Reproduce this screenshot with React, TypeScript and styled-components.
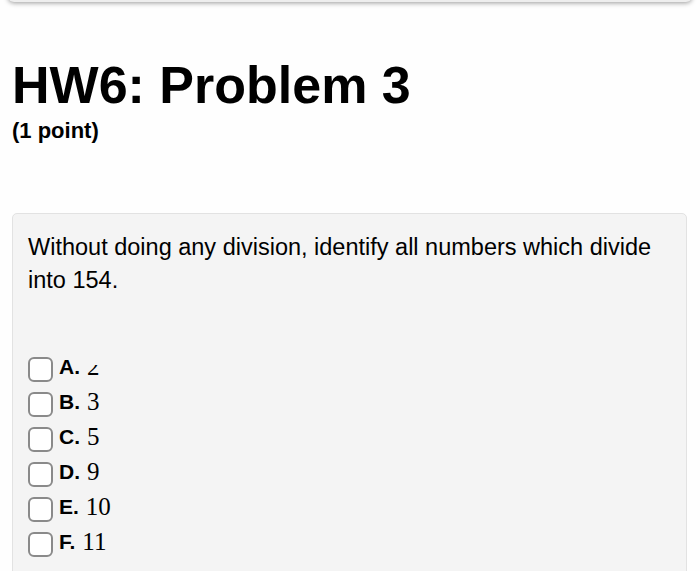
import React from "react";
import styled, { createGlobalStyle } from "styled-components";

const Global = createGlobalStyle`
  html, body { margin: 0; padding: 0; background: #fefefe; }
  body { font-family: "Liberation Sans", Arial, sans-serif; color: #000; overflow: hidden; }
`;

const Page = styled.div`
  width: 700px;
  height: 571px;
  overflow: hidden;
  display: flex;
  flex-direction: column;
`;

const TopBar = styled.div`
  margin: -6px 8px 0;
  height: 8px;
  background: #eeeeee;
  border-radius: 0 0 6px 6px;
  box-shadow: 0 1px 5px rgba(0, 0, 0, 0.4);
  flex: none;
`;

const Content = styled.div`
  padding: 0 13px 0 12px;
  display: flex;
  flex-direction: column;
`;

const Title = styled.h1`
  margin: 57px 0 0;
  font-size: 52px;
  line-height: 52px;
  font-weight: 700;
`;

const Points = styled.div`
  margin-top: 9px;
  font-size: 22px;
  line-height: 22px;
  font-weight: 700;
`;

const Panel = styled.div`
  margin-top: 71px;
  background: #f4f4f4;
  border: 1px solid #e2e2e2;
  border-radius: 5px;
  padding: 17px 16px 40px 15px;
  height: 400px;
  box-sizing: border-box;
`;

const Question = styled.p`
  margin: 0;
  font-size: 23.5px;
  line-height: 33px;
`;

const Options = styled.div`
  margin-top: 60px;
  display: flex;
  flex-direction: column;
  gap: 10px;
`;

const Row = styled.label`
  display: flex;
  align-items: flex-start;
  height: 25px;
`;

const Box = styled.span`
  width: 21px;
  height: 21px;
  border: 2px solid #8a8a8a;
  border-radius: 6px;
  background: #fff;
  flex: none;
`;

const Letter = styled.span`
  font-weight: 700;
  font-size: 21px;
  margin-left: 6px;
  line-height: 21px;
  margin-top: -1px;
`;

const Value = styled.span`
  font-family: "Liberation Serif", "DejaVu Serif", serif;
  font-size: 25px;
  margin-left: 7px;
  line-height: 25px;
  margin-top: -3px;
`;

const Clipped = styled.span`
  display: inline-block;
  height: 11px;
  overflow: hidden;
  position: relative;
  vertical-align: top;
  margin-top: 11px;
  width: 14px;
  & > span {
    position: absolute;
    left: 0;
    bottom: -3px;
    line-height: 25px;
  }
`;

const options = [
  { l: "A.", v: "2", clip: true },
  { l: "B.", v: "3" },
  { l: "C.", v: "5" },
  { l: "D.", v: "9" },
  { l: "E.", v: "10" },
  { l: "F.", v: "11" },
];

export default function App() {
  return (
    <Page>
      <Global />
      <TopBar />
      <Content>
        <Title>HW6: Problem 3</Title>
        <Points>(1 point)</Points>
        <Panel>
          <Question>
            Without doing any division, identify all numbers which divide into 154.
          </Question>
          <Options>
            {options.map((o) => (
              <Row key={o.l}>
                <Box />
                <Letter>{o.l}</Letter>
                <Value>
                  {o.clip ? (
                    <Clipped>
                      <span>{o.v}</span>
                    </Clipped>
                  ) : (
                    o.v
                  )}
                </Value>
              </Row>
            ))}
          </Options>
        </Panel>
      </Content>
    </Page>
  );
}
